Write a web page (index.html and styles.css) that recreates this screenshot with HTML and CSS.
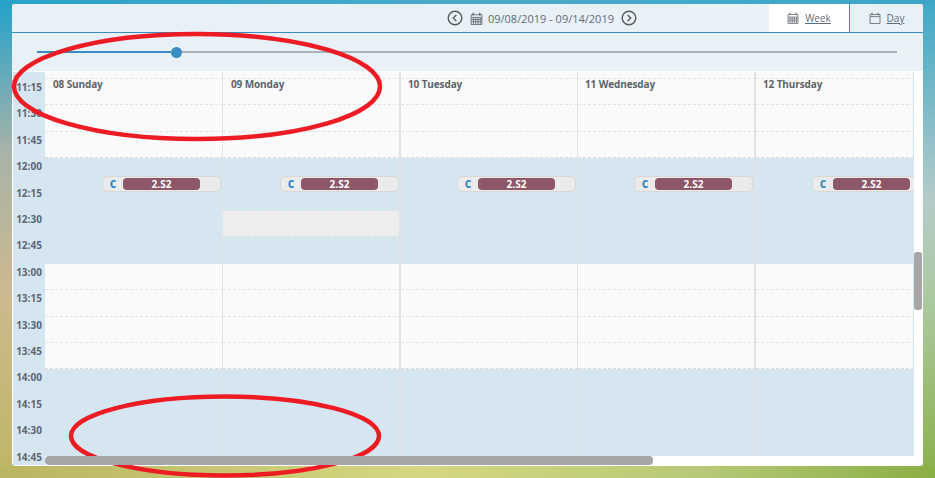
FILE: index.html
```html
<!DOCTYPE html>
<html lang="en">
<head>
<meta charset="utf-8">
<title>Calendar</title>
<link rel="stylesheet" href="styles.css">
</head>
<body>
<svg width="0" height="0" class="defs">
  <defs>
    <symbol id="cal-grid" viewBox="0 0 12 12">
      <path d="M1 2.5h10v9H1z M1 5h10 M1 7h10 M1 9h10 M3.2 5v6.5 M5.3 5v6.5 M7.4 5v6.5 M9.5 5v6.5" fill="none" stroke="currentColor" stroke-width=".8"/>
      <path d="M3 .8v2.4 M9 .8v2.4" fill="none" stroke="currentColor" stroke-width="1.3"/>
    </symbol>
    <symbol id="cal-plain" viewBox="0 0 12 12">
      <path d="M1 2.5h10v9H1z M1 4.6h10" fill="none" stroke="currentColor" stroke-width=".9"/>
      <path d="M3 .8v2.4 M9 .8v2.4" fill="none" stroke="currentColor" stroke-width="1.3"/>
    </symbol>
  </defs>
</svg>
<main class="panel">
  <header class="topbar">
    <nav class="date-nav">
      <svg class="round-btn" viewBox="0 0 16 16"><circle cx="8" cy="8" r="6.8"/><path d="M9.3 5 6.3 8l3 3"/></svg>
      <svg class="nav-cal"><use href="#cal-grid"/></svg>
      <span class="range">09/08/2019 - 09/14/2019</span>
      <svg class="round-btn" viewBox="0 0 16 16"><circle cx="8" cy="8" r="6.8"/><path d="M6.7 5l3 3-3 3"/></svg>
    </nav>
    <div class="tabs">
      <a class="tab tab-active"><svg class="tab-icon"><use href="#cal-grid"/></svg><span>Week</span></a>
      <a class="tab tab-day"><svg class="tab-icon"><use href="#cal-plain"/></svg><span>Day</span></a>
    </div>
  </header>
  <div class="slider">
    <div class="track-done"></div>
    <div class="thumb"></div>
    <div class="track-rest"></div>
  </div>
  <section class="calendar">
    <div class="day-heads">
      <div></div><div>08 Sunday</div><div>09 Monday</div><div>10 Tuesday</div><div>11 Wednesday</div><div>12 Thursday</div>
    </div>
    <div class="row white partial"><div class="t"></div><div class="c"></div><div class="c"></div><div class="c"></div><div class="c"></div><div class="c"></div></div>
    <div class="row white"><div class="t">11:15</div><div class="c"></div><div class="c"></div><div class="c"></div><div class="c"></div><div class="c"></div></div>
    <div class="row white"><div class="t">11:30</div><div class="c"></div><div class="c"></div><div class="c"></div><div class="c"></div><div class="c"></div></div>
    <div class="row white last"><div class="t">11:45</div><div class="c"></div><div class="c"></div><div class="c"></div><div class="c"></div><div class="c"></div></div>
    <div class="row blue"><div class="t">12:00</div>
      <div class="c"><div class="pill"><b>C</b><span>2.S2</span></div></div>
      <div class="c"><div class="pill"><b>C</b><span>2.S2</span></div></div>
      <div class="c"><div class="pill"><b>C</b><span>2.S2</span></div></div>
      <div class="c"><div class="pill"><b>C</b><span>2.S2</span></div></div>
      <div class="c"><div class="pill"><b>C</b><span>2.S2</span></div></div>
    </div>
    <div class="row blue"><div class="t">12:15</div><div class="c"></div><div class="c"></div><div class="c"></div><div class="c"></div><div class="c"></div></div>
    <div class="row blue"><div class="t">12:30</div><div class="c"></div><div class="c busy"></div><div class="c"></div><div class="c"></div><div class="c"></div></div>
    <div class="row blue"><div class="t">12:45</div><div class="c"></div><div class="c"></div><div class="c"></div><div class="c"></div><div class="c"></div></div>
    <div class="row white"><div class="t">13:00</div><div class="c"></div><div class="c"></div><div class="c"></div><div class="c"></div><div class="c"></div></div>
    <div class="row white"><div class="t">13:15</div><div class="c"></div><div class="c"></div><div class="c"></div><div class="c"></div><div class="c"></div></div>
    <div class="row white"><div class="t">13:30</div><div class="c"></div><div class="c"></div><div class="c"></div><div class="c"></div><div class="c"></div></div>
    <div class="row white last"><div class="t">13:45</div><div class="c"></div><div class="c"></div><div class="c"></div><div class="c"></div><div class="c"></div></div>
    <div class="row blue"><div class="t">14:00</div><div class="c"></div><div class="c"></div><div class="c"></div><div class="c"></div><div class="c"></div></div>
    <div class="row blue"><div class="t">14:15</div><div class="c"></div><div class="c"></div><div class="c"></div><div class="c"></div><div class="c"></div></div>
    <div class="row blue"><div class="t">14:30</div><div class="c"></div><div class="c"></div><div class="c"></div><div class="c"></div><div class="c"></div></div>
    <div class="row blue"><div class="t">14:45</div><div class="c"></div><div class="c"></div><div class="c"></div><div class="c"></div><div class="c"></div></div>
    <div class="h-track"><div class="h-thumb"></div></div>
  </section>
  <div class="scroll-v"></div>
</main>
<svg class="marks" viewBox="0 0 935 478">
  <ellipse cx="197" cy="86.5" rx="183" ry="52.5"/>
  <ellipse cx="225" cy="436" rx="154" ry="39.5"/>
</svg>
</body>
</html>
```
FILE: styles.css
```css
* { box-sizing: border-box; }
html, body { margin: 0; height: 100%; }
body {
  width: 935px;
  height: 478px;
  overflow: hidden;
  position: relative;
  padding: 4px 12px 12px;
  font-family: "Open Sans", "Noto Sans", sans-serif;
  color: #5c636b;
  background-color: #b5c4a0;
  background-image:
    linear-gradient(90deg, #2aa3cb, #4aa9c8 50%, #3ca6c8),
    linear-gradient(90deg, #b9b560, #d6d780 45%, #b6c977 75%, #8aaf45),
    linear-gradient(180deg, #22a2cb, #a9b3a8 32%, #cdb98e 62%, #bdb765),
    linear-gradient(180deg, #3fa8c8, #b5cbc8 42%, #abc9a0 63%, #8bb04a);
  background-repeat: no-repeat;
  background-size: 100% 4px, 100% 12px, 12px 100%, 12px 100%;
  background-position: 0 0, 0 100%, 0 0, 100% 0;
}
.defs { position: absolute; }

.panel {
  position: relative;
  width: 911px;
  height: 462px;
  background: #fff;
  border-radius: 4px;
  display: flex;
  flex-direction: column;
  overflow: hidden;
}

.topbar {
  height: 29px;
  flex: none;
  display: flex;
  justify-content: flex-end;
  background: #e8f0f8;
  border-bottom: 1px solid #3b8cc2;
}
.date-nav {
  display: flex;
  align-items: center;
  margin-right: 132px;
  font-size: 11px;
  color: #666c74;
}
.round-btn {
  width: 16px;
  height: 16px;
  fill: none;
  stroke: #555b63;
  stroke-width: 1.4;
}
.nav-cal { width: 13px; height: 13px; margin: 0 5px 0 7px; color: #666c74; }
.range { margin-right: 7px; }

.tabs { display: flex; }
.tab {
  display: flex;
  align-items: center;
  justify-content: center;
  gap: 6px;
  font-size: 10px;
  color: #666c74;
}
.tab span { text-decoration: underline; }
.tab-active { width: 81px; background: #fff; border-right: 1px solid #3b8cc2; }
.tab-day { width: 73px; }
.tab-icon { width: 12px; height: 12px; color: #70767e; }

.slider {
  height: 38px;
  flex: none;
  display: flex;
  align-items: center;
  padding: 0 26px 0 25px;
  background: #e8f0f8;
}
.track-done { width: 134px; height: 2px; background: #3b8cc2; }
.thumb { width: 11px; height: 11px; border-radius: 50%; background: #3b8cc2; flex: none; }
.track-rest { flex: 1; height: 2px; background: #a9b2bb; }

.calendar {
  position: relative;
  margin: 1px 0 0 1px;
  width: 901px;
  height: 393px;
  overflow: hidden;
  flex: none;
}
.row, .day-heads {
  display: grid;
  grid-template-columns: 32px 178px 178px 177px 178px 158px;
}
.row { height: 26.4px; }
.partial { height: 7.1px; }
.day-heads {
  position: absolute;
  top: 5px;
  left: 0;
  right: 0;
  z-index: 2;
  font-size: 10px;
  font-weight: 700;
  line-height: 14px;
  letter-spacing: -.12px;
  color: #5c636b;
}
.day-heads div { padding-left: 8px; }
.day-heads div:nth-child(n+4) { padding-left: 7px; }

.t {
  background: #d5e6f1;
  font-size: 10px;
  font-weight: 700;
  line-height: 16px;
  text-align: center;
  color: #5f6670;
}
.c { position: relative; border-right: 1px solid #e2e2e2; border-bottom: 1px dashed #e4e4e4; }
.c:nth-child(3), .c:nth-child(5) { border-right-width: 2px; }
.c:last-child { border-right: 1px solid #d5e6f1; }
.white .c { background: #fafafa; }
.blue .c { background: #d5e6f1; border-bottom-color: #dbe6ee; border-right-color: #dfe3e6; }
.white.last .c { border-bottom-color: #dddddd; }
.blue .c.busy { background: #ededed; border-bottom-color: #dddddd; }

.pill {
  position: absolute;
  z-index: 1;
  left: 57px;
  top: 18px;
  width: 119px;
  height: 16px;
  display: flex;
  align-items: center;
  border: 1px solid #d8d8d8;
  border-radius: 5px;
  background: #ebebeb;
  font-size: 10px;
  font-weight: 700;
}
.c:nth-child(n+4) .pill { left: 56px; }
.pill b { width: 20px; text-align: center; color: #3b8cc2; flex: none; }
.pill span {
  width: 77px;
  height: 12px;
  line-height: 12px;
  border-radius: 4px;
  background: #8c5768;
  color: #fff;
  text-align: center;
}

.h-track {
  position: absolute;
  left: 32px;
  top: 384px;
  width: 869px;
  height: 9px;
  background: #fff;
  z-index: 3;
}
.h-thumb { width: 608px; height: 9px; border-radius: 4px; background: #a6a6a6; }
.scroll-v {
  position: absolute;
  left: 902px;
  top: 248px;
  width: 8px;
  height: 58px;
  border-radius: 3px;
  background: #a6a6a6;
}
.marks {
  position: absolute;
  left: 0;
  top: 0;
  width: 935px;
  height: 478px;
  fill: none;
  stroke: #ed1c24;
  stroke-width: 4.5;
  pointer-events: none;
}
```
